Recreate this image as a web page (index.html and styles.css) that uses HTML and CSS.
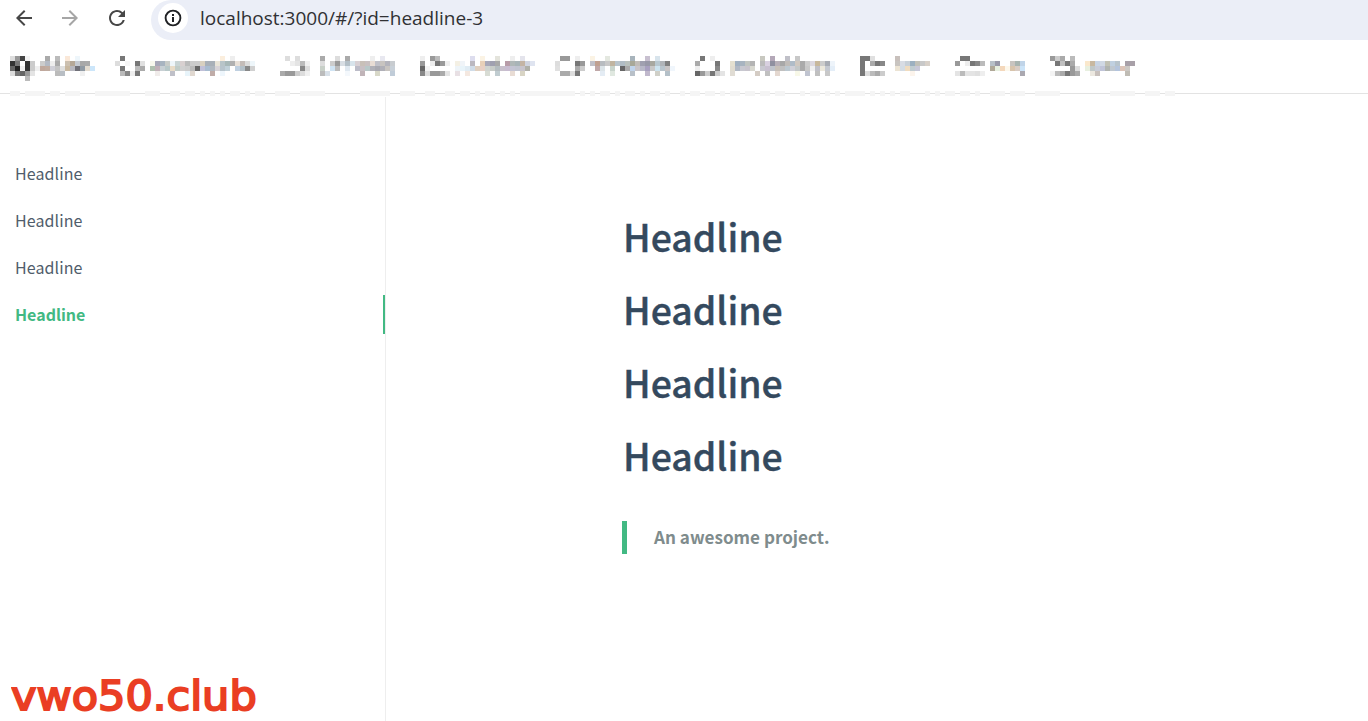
FILE: index.html
```html
<!DOCTYPE html>
<html lang="en">
<head>
<meta charset="utf-8">
<title>Headline</title>
<link rel="stylesheet" href="styles.css">
</head>
<body>
<div class="app">
  <header class="toolbar">
    <svg class="nav-icon" viewBox="0 0 24 24"><path d="M20 11H7.83l5.59-5.59L12 4l-8 8 8 8 1.41-1.41L7.83 13H20v-2z"/></svg>
    <svg class="nav-icon nav-off" viewBox="0 0 24 24"><path d="M4 11h12.17l-5.59-5.59L12 4l8 8-8 8-1.41-1.41L16.17 13H4v-2z"/></svg>
    <svg class="nav-icon nav-reload" viewBox="0 0 24 24"><path d="M17.65 6.35A7.96 7.96 0 0 0 12 4c-4.42 0-7.99 3.58-7.99 8s3.57 8 7.99 8c3.73 0 6.84-2.55 7.73-6h-2.08A5.99 5.99 0 0 1 12 18c-3.31 0-6-2.69-6-6s2.69-6 6-6c1.66 0 3.14.69 4.22 1.78L13 11h7V4l-2.35 2.35z"/></svg>
    <div class="omnibox">
      <span class="site-info">
        <svg class="info-icon" viewBox="0 0 20 20"><circle cx="10" cy="10" r="7.4" fill="none" stroke="#202124" stroke-width="1.9"/><rect x="9" y="9" width="2" height="5" fill="#202124"/><rect x="9" y="6" width="2" height="2" fill="#202124"/></svg>
      </span>
      <span class="url">localhost:3000/#/?id=headline-3</span>
    </div>
  </header>

  <div class="bookmarks">
    <svg class="mosaic" width="1368" height="56" viewBox="0 40 1368 56">
      <g class="strip">
        <rect x="10" width="10"/><rect x="25" width="20"/><rect x="50" width="10"/><rect x="65" width="15"/><rect x="95" width="35"/><rect x="145" width="15"/><rect x="170" width="10"/><rect x="185" width="10"/><rect x="200" width="5"/><rect x="210" width="5"/><rect x="220" width="5"/><rect x="230" width="10"/><rect x="245" width="5"/><rect x="255" width="10"/><rect x="275" width="15"/><rect x="300" width="25"/><rect x="360" width="30"/><rect x="400" width="15"/><rect x="425" width="10"/><rect x="445" width="10"/><rect x="460" width="10"/><rect x="475" width="5"/><rect x="485" width="10"/><rect x="500" width="5"/><rect x="510" width="5"/><rect x="520" width="55"/><rect x="580" width="5"/><rect x="590" width="5"/><rect x="600" width="10"/><rect x="615" width="5"/><rect x="625" width="10"/><rect x="640" width="5"/><rect x="650" width="10"/><rect x="665" width="5"/><rect x="680" width="5"/><rect x="690" width="10"/><rect x="705" width="10"/><rect x="720" width="5"/><rect x="730" width="10"/><rect x="745" width="10"/><rect x="760" width="10"/><rect x="775" width="10"/><rect x="800" width="5"/><rect x="810" width="10"/><rect x="825" width="5"/><rect x="835" width="5"/><rect x="845" width="20"/><rect x="870" width="5"/><rect x="880" width="5"/><rect x="890" width="5"/><rect x="900" width="10"/><rect x="925" width="5"/><rect x="935" width="5"/><rect x="945" width="10"/><rect x="960" width="10"/><rect x="975" width="5"/><rect x="990" width="15"/><rect x="1010" width="15"/><rect x="1035" width="25"/><rect x="1110" width="25"/><rect x="1145" width="15"/><rect x="1165" width="10"/>
      </g>
      <g class="cells">
        <g class="r1">
          <rect x="10" fill="#ddd"/><rect x="15" fill="#999"/><rect x="20" fill="#444"/><rect x="25" fill="#f4f4f4"/><rect x="45" fill="#aaa"/><rect x="55" fill="#bbb"/><rect x="65" fill="#fae8d8"/><rect x="75" fill="#eef6fb"/><rect x="120" fill="#777"/>
          <rect x="220" fill="#fbeedd"/><rect x="230" fill="#eee"/><rect x="285" fill="#ddd"/><rect x="295" fill="#ddd"/><rect x="320" fill="#aaa"/><rect x="335" fill="#ddd"/><rect x="345" fill="#aaa"/><rect x="370" fill="#eee"/><rect x="380" fill="#e8e8f0"/>
          <rect x="420" fill="#eee"/><rect x="430" fill="#999"/><rect x="435" fill="#bbb"/><rect x="470" fill="#dde"/><rect x="480" fill="#fbf3e4"/><rect x="495" fill="#e4e4dc"/><rect x="510" fill="#eee"/><rect x="520" fill="#e4e4ec"/><rect x="560" fill="#999"/><rect x="565" fill="#999"/><rect x="575" fill="#eee"/><rect x="590" fill="#fbf3e4"/>
          <rect x="605" fill="#e4e8e0"/><rect x="630" fill="#a8b4bc"/><rect x="645" fill="#c8c0d0"/><rect x="655" fill="#d8e4ec"/><rect x="700" fill="#777"/><rect x="710" fill="#eee"/><rect x="760" fill="#c8c8c0"/><rect x="770" fill="#b4a8b8"/><rect x="785" fill="#c0c0c8"/><rect x="795" fill="#c8c8c8"/>
          <rect x="860" fill="#777"/><rect x="865" fill="#777"/><rect x="870" fill="#e0e0e0"/><rect x="895" fill="#c8c0bc"/><rect x="960" fill="#777"/><rect x="965" fill="#777"/>
          <rect x="1050" fill="#999"/><rect x="1055" fill="#ccc"/><rect x="1060" fill="#aaa"/><rect x="1070" fill="#bbb"/>
        </g>
        <g class="r2">
          <rect x="10" fill="#333"/><rect x="15" fill="#777"/><rect x="25" fill="#333"/><rect x="30" fill="#ccc"/><rect x="40" fill="#ccc"/><rect x="45" fill="#b4bac4"/><rect x="50" fill="#eee"/><rect x="55" fill="#aaa"/><rect x="65" fill="#ccc0b0"/><rect x="70" fill="#b5a898"/><rect x="75" fill="#c5cad2"/><rect x="80" fill="#a8a8a8"/><rect x="85" fill="#aaa"/>
          <rect x="115" fill="#ddd"/><rect x="125" fill="#f6f6f6"/><rect x="135" fill="#777"/><rect x="140" fill="#e0e0e0"/><rect x="150" fill="#f8f8ee"/><rect x="155" fill="#a8a8b8"/><rect x="160" fill="#a8b4c0"/><rect x="165" fill="#c8ccc8"/><rect x="170" fill="#eef6fa"/><rect x="175" fill="#c8d4d4"/><rect x="180" fill="#d8d0d0"/><rect x="185" fill="#bbb"/><rect x="190" fill="#ccc"/><rect x="195" fill="#ccc"/>
          <rect x="200" fill="#d8d0c0"/><rect x="205" fill="#a8b0b8"/><rect x="210" fill="#a8b0b8"/><rect x="215" fill="#e8e4d8"/><rect x="220" fill="#b8c4c8"/><rect x="225" fill="#a8b8b8"/><rect x="230" fill="#b0b0b0"/><rect x="235" fill="#e8e0d8"/><rect x="240" fill="#c4bcb8"/><rect x="245" fill="#dcdcdc"/><rect x="250" fill="#eef6fa"/>
          <rect x="290" fill="#eee"/><rect x="295" fill="#e4e4e4"/><rect x="300" fill="#bbb"/><rect x="305" fill="#f0f0f0"/><rect x="320" fill="#ddd"/><rect x="330" fill="#ccc"/><rect x="335" fill="#999"/><rect x="340" fill="#d8dee4"/><rect x="345" fill="#b4c0c8"/><rect x="350" fill="#d8e4ec"/><rect x="355" fill="#d8d0d4"/><rect x="360" fill="#c8c0b8"/><rect x="365" fill="#c8c0c0"/><rect x="370" fill="#e8dcd4"/><rect x="375" fill="#c0c0c8"/><rect x="380" fill="#c8c4c0"/><rect x="385" fill="#b4b4bc"/><rect x="390" fill="#c8ccd0"/>
          <rect x="420" fill="#999"/><rect x="430" fill="#eee"/><rect x="435" fill="#777"/><rect x="440" fill="#999"/><rect x="445" fill="#eee"/><rect x="455" fill="#f4f0e4"/><rect x="460" fill="#f0f4f8"/><rect x="470" fill="#bbb8c0"/><rect x="480" fill="#e8d0b8"/><rect x="485" fill="#a8a8b8"/><rect x="490" fill="#a0a0b0"/><rect x="495" fill="#a8a8a8"/><rect x="505" fill="#b89ca8"/><rect x="510" fill="#b0b8b8"/><rect x="515" fill="#a8b4b8"/><rect x="520" fill="#c4b4a4"/><rect x="525" fill="#d0d4e0"/><rect x="530" fill="#dfe4f0"/>
          <rect x="555" fill="#ddd"/><rect x="575" fill="#777"/><rect x="580" fill="#999"/><rect x="590" fill="#c0c0c8"/><rect x="595" fill="#c0a090"/>
          <rect x="600" fill="#b8bcc0"/><rect x="605" fill="#c8c8c8"/><rect x="610" fill="#c0b4a0"/><rect x="615" fill="#b8c4cc"/><rect x="620" fill="#b0bcc4"/><rect x="625" fill="#b8c0bc"/><rect x="630" fill="#a8a898"/><rect x="635" fill="#c0bcb8"/><rect x="640" fill="#a0a0b0"/><rect x="645" fill="#9898a8"/><rect x="650" fill="#a8a8a0"/><rect x="655" fill="#b8c8d0"/><rect x="660" fill="#b0b4b8"/><rect x="665" fill="#808080"/>
          <rect x="695" fill="#aaa"/><rect x="715" fill="#777"/><rect x="730" fill="#e4e0d0"/><rect x="735" fill="#a0b0c0"/><rect x="740" fill="#a8b4c0"/><rect x="745" fill="#c0c4c0"/><rect x="750" fill="#b4b4b4"/><rect x="760" fill="#bbb"/><rect x="765" fill="#d8d0e0"/><rect x="770" fill="#9090a0"/><rect x="775" fill="#b8b0b8"/><rect x="780" fill="#a8a8a8"/><rect x="785" fill="#c0bcb8"/><rect x="790" fill="#b0bcc8"/><rect x="795" fill="#d0c8c0"/>
          <rect x="800" fill="#aaa"/><rect x="805" fill="#ccc"/><rect x="810" fill="#dcd8e0"/><rect x="815" fill="#c8b89c"/><rect x="820" fill="#ccc"/><rect x="825" fill="#a8acb4"/><rect x="830" fill="#eef4fa"/>
          <rect x="860" fill="#777"/><rect x="870" fill="#aaa"/><rect x="875" fill="#777"/><rect x="880" fill="#888"/><rect x="895" fill="#c8c4c0"/><rect x="900" fill="#d8dce4"/><rect x="905" fill="#c8d0d8"/><rect x="910" fill="#9cb0c0"/><rect x="915" fill="#c0c0b8"/><rect x="920" fill="#c8c8c8"/><rect x="925" fill="#d8d0c8"/>
          <rect x="955" fill="#999"/><rect x="965" fill="#eee"/><rect x="970" fill="#777"/><rect x="975" fill="#888"/><rect x="980" fill="#bbb"/><rect x="990" fill="#b8c0c8"/><rect x="995" fill="#9898a8"/>
          <rect x="1010" fill="#c8c4c0"/><rect x="1015" fill="#a8b4b0"/><rect x="1020" fill="#c0d4e8"/>
          <rect x="1055" fill="#777"/><rect x="1060" fill="#c0c0c0"/><rect x="1065" fill="#777"/><rect x="1070" fill="#aaa"/><rect x="1085" fill="#fae8cc"/><rect x="1090" fill="#c8b8a0"/><rect x="1095" fill="#c8d4e4"/><rect x="1100" fill="#d0d8e4"/><rect x="1105" fill="#c0c0b4"/><rect x="1110" fill="#c0d0e0"/><rect x="1115" fill="#b8c4cc"/><rect x="1125" fill="#a8a0a8"/><rect x="1130" fill="#a8a0a8"/>
        </g>
        <g class="r3">
          <rect x="10" fill="#666"/><rect x="15" fill="#222"/><rect x="20" fill="#f0f0f0"/><rect x="25" fill="#333"/><rect x="30" fill="#ccc"/><rect x="35" fill="#f0f0f0"/><rect x="40" fill="#c0a89c"/><rect x="45" fill="#c0aca0"/><rect x="50" fill="#d0d0d8"/><rect x="55" fill="#c4c4c4"/><rect x="60" fill="#e0e0e0"/><rect x="65" fill="#c8b8a0"/><rect x="70" fill="#b8b8c0"/><rect x="75" fill="#707078"/><rect x="80" fill="#909aa4"/><rect x="85" fill="#e4dcd0"/><rect x="90" fill="#cce6fa"/>
          <rect x="120" fill="#777"/><rect x="135" fill="#bbb"/><rect x="140" fill="#aaa"/><rect x="150" fill="#b0c0b0"/><rect x="155" fill="#c0b0b8"/><rect x="160" fill="#c8d0d4"/><rect x="165" fill="#b8c8c8"/><rect x="170" fill="#e8dcc8"/><rect x="175" fill="#c0ccc8"/><rect x="180" fill="#d0d0d0"/><rect x="185" fill="#ccc"/><rect x="190" fill="#bbb"/><rect x="195" fill="#666"/>
          <rect x="200" fill="#c0c0d8"/><rect x="205" fill="#a8bcd0"/><rect x="210" fill="#b0b8c0"/><rect x="215" fill="#d8d4d8"/><rect x="220" fill="#b8c4cc"/><rect x="225" fill="#c0d0d8"/><rect x="235" fill="#c0d0e0"/><rect x="240" fill="#b4c0c8"/><rect x="245" fill="#888"/><rect x="250" fill="#d0d0d0"/>
          <rect x="300" fill="#888"/><rect x="305" fill="#ddd"/><rect x="320" fill="#c8d0c8"/><rect x="330" fill="#d0e4f4"/><rect x="335" fill="#bbb"/><rect x="345" fill="#dfe8f0"/><rect x="355" fill="#bcbcc8"/><rect x="360" fill="#c8c0c4"/><rect x="365" fill="#b8c8c8"/><rect x="370" fill="#b0b0b8"/><rect x="375" fill="#a8a8b0"/><rect x="380" fill="#b0b0b8"/><rect x="385" fill="#c8c4c0"/><rect x="390" fill="#c8d0d8"/>
          <rect x="420" fill="#666"/><rect x="425" fill="#f4f4f4"/><rect x="455" fill="#eef4f8"/><rect x="460" fill="#e8f4fa"/><rect x="465" fill="#e0ecf4"/><rect x="470" fill="#d0dce8"/><rect x="475" fill="#e0d0c0"/><rect x="480" fill="#e8d0c4"/><rect x="485" fill="#d0d4d0"/><rect x="490" fill="#c8ccc8"/><rect x="495" fill="#b4bcc0"/><rect x="500" fill="#c8c0cc"/><rect x="505" fill="#c8bcd0"/><rect x="510" fill="#c4c4d4"/><rect x="515" fill="#c0c4d0"/><rect x="520" fill="#c8c4cc"/><rect x="525" fill="#b0b0a8"/>
          <rect x="555" fill="#e0e0e0"/><rect x="575" fill="#aaa"/><rect x="580" fill="#ccc"/><rect x="595" fill="#c0a8a8"/>
          <rect x="600" fill="#dce4e8"/><rect x="610" fill="#c8d4cc"/><rect x="620" fill="#666"/><rect x="625" fill="#aaa"/><rect x="630" fill="#c0d4ec"/><rect x="635" fill="#c8c4c8"/><rect x="640" fill="#b8b8c8"/><rect x="645" fill="#a8a0c0"/><rect x="650" fill="#c8c8c8"/><rect x="655" fill="#cce4f0"/><rect x="660" fill="#b8c4cc"/><rect x="665" fill="#c8c4c4"/><rect x="670" fill="#f0f6fc"/>
          <rect x="695" fill="#eee"/><rect x="715" fill="#888"/><rect x="730" fill="#e0dcd0"/><rect x="735" fill="#b0b8c4"/><rect x="740" fill="#c8c8d0"/><rect x="745" fill="#c8c4cc"/><rect x="750" fill="#d8d8d0"/><rect x="760" fill="#c8c8d0"/><rect x="765" fill="#c8c0d0"/><rect x="770" fill="#c0c4cc"/><rect x="775" fill="#c8c0b8"/><rect x="780" fill="#c0c0c0"/><rect x="785" fill="#bcc8d0"/><rect x="790" fill="#d0d0d8"/><rect x="795" fill="#c4c8c8"/>
          <rect x="800" fill="#aaa"/><rect x="805" fill="#c8c8c8"/><rect x="810" fill="#f0f0f0"/><rect x="815" fill="#c0c0c8"/><rect x="820" fill="#ece8dc"/><rect x="825" fill="#c4c8d0"/><rect x="830" fill="#e4eef8"/>
          <rect x="860" fill="#777"/><rect x="895" fill="#ece4d4"/><rect x="900" fill="#d4dce4"/><rect x="905" fill="#f0dcc0"/><rect x="910" fill="#c0ccd0"/><rect x="915" fill="#c8c8d8"/><rect x="955" fill="#fff"/><rect x="990" fill="#b0a898"/><rect x="995" fill="#e8f0e0"/>
          <rect x="1000" fill="#f4d8bc"/><rect x="1005" fill="#fdf8ec"/><rect x="1010" fill="#d8c4ac"/><rect x="1015" fill="#d8ccc4"/><rect x="1020" fill="#cce4f8"/>
          <rect x="1070" fill="#999"/><rect x="1075" fill="#ddd"/><rect x="1085" fill="#e8f0e0"/><rect x="1090" fill="#c0c8c8"/><rect x="1095" fill="#c8ccd8"/><rect x="1100" fill="#c0c4d8"/><rect x="1105" fill="#b0b4b0"/><rect x="1110" fill="#c0c8d0"/><rect x="1115" fill="#b4c4dc"/><rect x="1120" fill="#dcc4b8"/><rect x="1125" fill="#ccc8c4"/>
        </g>
        <g class="r4">
          <rect x="10" fill="#ddd"/><rect x="15" fill="#777"/><rect x="20" fill="#666"/><rect x="25" fill="#999"/><rect x="30" fill="#e4e4e4"/><rect x="55" fill="#bbb"/><rect x="60" fill="#b8bec4"/><rect x="80" fill="#f0f0f0"/>
          <rect x="120" fill="#bbb"/><rect x="125" fill="#888"/><rect x="130" fill="#eee"/><rect x="135" fill="#777"/><rect x="155" fill="#f0ecea"/><rect x="170" fill="#bfc0c8"/><rect x="185" fill="#e8f4fa"/><rect x="190" fill="#e0d8d0"/>
          <rect x="210" fill="#c0aca8"/><rect x="220" fill="#eef6fc"/><rect x="280" fill="#aaa"/><rect x="285" fill="#999"/><rect x="290" fill="#999"/><rect x="295" fill="#ccc"/><rect x="300" fill="#ddd"/><rect x="305" fill="#f0f0f0"/><rect x="320" fill="#bbb"/><rect x="325" fill="#d8e0e8"/><rect x="345" fill="#f4f8fc"/><rect x="360" fill="#c0b4b8"/><rect x="375" fill="#d8d8c8"/><rect x="390" fill="#c0ccd8"/>
          <rect x="420" fill="#888"/><rect x="425" fill="#ddd"/><rect x="430" fill="#999"/><rect x="435" fill="#999"/><rect x="440" fill="#aaa"/><rect x="445" fill="#e4e4e4"/><rect x="455" fill="#e8e0e4"/><rect x="465" fill="#f4e8e0"/><rect x="485" fill="#d8dcd4"/><rect x="495" fill="#c0ccd0"/><rect x="510" fill="#e8dcd4"/><rect x="520" fill="#d8d4c4"/>
          <rect x="560" fill="#aaa"/><rect x="565" fill="#aaa"/><rect x="570" fill="#ddd"/><rect x="575" fill="#777"/>
          <rect x="600" fill="#e4ecf4"/><rect x="610" fill="#e0e8e0"/><rect x="630" fill="#b8c0c8"/><rect x="645" fill="#c0b8cc"/><rect x="655" fill="#d0d0c8"/><rect x="665" fill="#b4c0c8"/>
          <rect x="695" fill="#666"/><rect x="700" fill="#999"/><rect x="705" fill="#ccc"/><rect x="710" fill="#777"/><rect x="715" fill="#ccc"/><rect x="720" fill="#e4e4e4"/><rect x="730" fill="#e0dcd4"/><rect x="755" fill="#d4ccc4"/><rect x="765" fill="#c0c0c0"/><rect x="775" fill="#e4d8d0"/><rect x="795" fill="#f8f8e8"/>
          <rect x="805" fill="#c0c4d0"/><rect x="815" fill="#c0c0c0"/><rect x="825" fill="#c8c8c8"/>
          <rect x="860" fill="#777"/><rect x="865" fill="#ddd"/><rect x="870" fill="#bbb"/><rect x="875" fill="#aaa"/><rect x="880" fill="#ccc"/><rect x="910" fill="#fcf4ec"/><rect x="955" fill="#e4e4e4"/><rect x="960" fill="#bbb"/><rect x="965" fill="#e4e4e4"/><rect x="970" fill="#e4e4e4"/><rect x="975" fill="#e0e0e0"/><rect x="980" fill="#eee"/>
          <rect x="1020" fill="#aaa8b0"/><rect x="1050" fill="#f4f4f4"/><rect x="1055" fill="#bbb"/><rect x="1060" fill="#aaa"/><rect x="1065" fill="#777"/><rect x="1070" fill="#999"/><rect x="1075" fill="#aaa"/><rect x="1090" fill="#ece8e0"/><rect x="1095" fill="#c8c0bc"/><rect x="1125" fill="#c0bcb4"/>
        </g>
        <g class="r5"><rect x="25" fill="#bbb"/></g>
      </g>
    </svg>
  </div>

  <div class="layout">
    <nav class="sidebar">
      <a class="nav-link">Headline</a>
      <a class="nav-link">Headline</a>
      <a class="nav-link">Headline</a>
      <a class="nav-link nav-active">Headline</a>
    </nav>
    <main class="content">
      <h1 class="title">Headline</h1>
      <h1 class="title">Headline</h1>
      <h1 class="title">Headline</h1>
      <h1 class="title">Headline</h1>
      <blockquote class="quote">An awesome project.</blockquote>
    </main>
  </div>

  <div class="watermark">vwo50.club</div>
</div>
</body>
</html>
```
FILE: styles.css
```css
* { box-sizing: border-box; }
html, body { margin: 0; padding: 0; height: 100%; overflow: hidden; background: #fff; }
body { font-family: "Noto Sans CJK SC", "Noto Sans", sans-serif; }

.app { position: relative; height: 721px; display: flex; flex-direction: column; overflow: hidden; }

.toolbar { height: 40px; flex: none; display: flex; align-items: flex-start; gap: 22px; padding: 6px 0 0 12px; }
.nav-icon { width: 24px; height: 24px; fill: #474747; flex: none; }
.nav-off { fill: #a6a6a6; }
.nav-reload { margin-left: 1px; }
.omnibox { flex: 1; height: 40px; margin-top: -6px; background: #ebeef7; border-radius: 22px 0 0 22px; display: flex; align-items: center; padding: 0 0 5px 7px; }
.site-info { width: 30px; height: 30px; border-radius: 50%; background: #fff; display: flex; align-items: center; justify-content: center; flex: none; }
.info-icon { width: 20px; height: 20px; }
.url { margin-left: 12px; font-family: "Open Sans", sans-serif; font-size: 19px; color: #303134; white-space: nowrap; }

.bookmarks { height: 54px; flex: none; position: relative; border-bottom: 1px solid #e3e3e3; }
.mosaic { position: absolute; left: 0; top: 0; display: block; }
.cells rect { width: 5px; height: 5px; }
.r1 rect { y: 56px; }
.r2 rect { y: 61px; }
.r3 rect { y: 66px; }
.r4 rect { y: 71px; }
.r5 rect { y: 76px; }
.strip rect { y: 91px; height: 5px; fill: #f5f5f5; }

.layout { flex: 1; display: flex; padding-top: 3px; min-height: 0; }
.sidebar { width: 386px; flex: none; border-right: 1px solid #eee; padding-top: 63px; display: flex; flex-direction: column; gap: 20px; }
.nav-link { display: block; height: 27px; line-height: 27px; padding-left: 15px; font-size: 16px; letter-spacing: 0.1px; color: #505d6b; position: relative; }
.nav-active { color: #42b983; font-weight: 700; letter-spacing: 0; }
.nav-active::after { content: ""; position: absolute; right: 0; top: -6px; width: 2px; height: 39px; background: #42b983; }

.content { flex: 1; padding: 115px 0 0 237px; }
.title { margin: 0 0 25px; height: 48px; line-height: 48px; font-size: 37.4px; font-weight: 500; color: #34495e; -webkit-text-stroke: 0.4px #34495e; }
.quote { margin: 42px 0 0 -1px; height: 33px; line-height: 32px; padding-left: 27px; border-left: 5px solid #42b983; font-size: 17.1px; font-weight: 700; color: #7f8c8d; }

.watermark { position: absolute; left: 11px; top: 672px; font-family: "DejaVu Sans", sans-serif; font-weight: 400; font-size: 41px; line-height: 48px; color: #ea3e23; -webkit-text-stroke: 2px #ea3e23; transform-origin: left center; transform: scaleX(1.05); white-space: nowrap; }
```
